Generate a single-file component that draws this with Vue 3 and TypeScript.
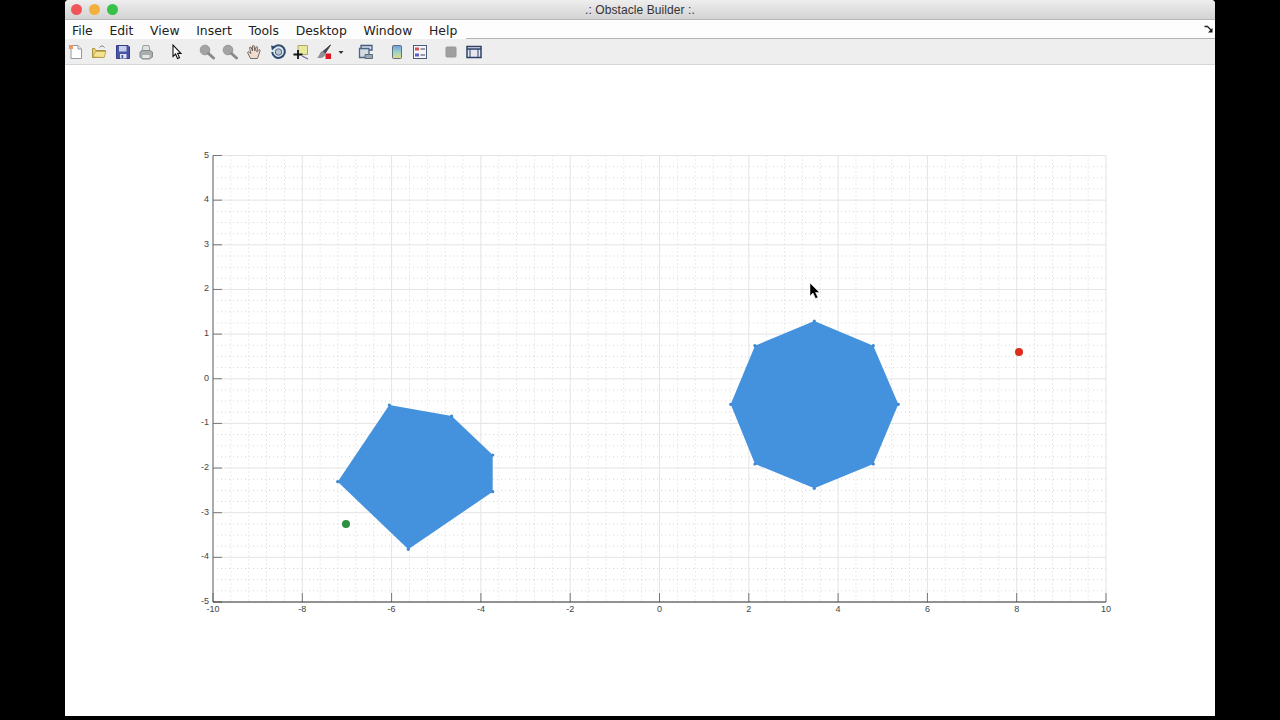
<script setup lang="ts">
const menus = ['File', 'Edit', 'View', 'Insert', 'Tools', 'Desktop', 'Window', 'Help']

// toolbar icon centres, in window pixels
const tools = [
  { id: 'new', x: 11 },
  { id: 'open', x: 34 },
  { id: 'save', x: 58 },
  { id: 'print', x: 81 },
  { id: 'pointer', x: 112 },
  { id: 'zoomin', x: 142 },
  { id: 'zoomout', x: 165 },
  { id: 'hand', x: 189 },
  { id: 'rotate', x: 213 },
  { id: 'cursor', x: 236 },
  { id: 'brush', x: 259 },
  { id: 'caret', x: 276 },
  { id: 'link', x: 301 },
  { id: 'colorbar', x: 332 },
  { id: 'legend', x: 355 },
  { id: 'hide', x: 386 },
  { id: 'show', x: 409 }
]

const toolMargin = (i: number) => {
  const prev = i === 0 ? 0 : tools[i - 1].x + 8
  return tools[i].x - 8 - prev + 'px'
}

// plot area inside the svg
const left = 148
const right = 1041
const top = 90.5
const bottom = 537
const unit = (right - left) / 20
const sx = (v: number) => left + (v + 10) * unit
const sy = (v: number) => bottom - (v + 5) * unit

const xTicks = [-10, -8, -6, -4, -2, 0, 2, 4, 6, 8, 10]
const yTicks = [5, 4, 3, 2, 1, 0, -1, -2, -3, -4, -5]

const xMinor: number[] = []
for (let i = 0; i <= 50; i++) if (i % 5 !== 0) xMinor.push(-10 + i * 0.4)
const yMinor: number[] = []
for (let i = 0; i <= 40; i++) if (i % 4 !== 0) yMinor.push(-5 + i * 0.25)

const pentagon: [number, number][] = [
  [324.3, 340], [386.7, 351], [427.7, 390], [427.7, 426.7], [343.3, 484.3], [272.7, 416.7]
]
const octagon: [number, number][] = [
  [749.3, 256], [808.3, 280.7], [833.3, 339.3], [808.3, 399], [749.3, 423.3], [690, 399], [665.7, 339.3], [690, 280.7]
]
const pts = (p: [number, number][]) => p.map((q) => q.join(',')).join(' ')
</script>

<template>
  <div class="screen">
    <div class="window">
      <header class="titlebar">
        <div class="lights">
          <span class="light red"></span>
          <span class="light yellow"></span>
          <span class="light green"></span>
        </div>
        <span class="title">.: Obstacle Builder :.</span>
      </header>

      <nav class="menubar">
        <span v-for="m in menus" :key="m" class="menu">{{ m }}</span>
        <span class="menu-rest">
          <svg class="dock" width="9" height="8" viewBox="0 0 9 8">
            <path d="M0.5 1.5H3.5L7 5" fill="none" stroke="#222" stroke-width="1.3" />
            <path d="M8.5 3V7.5H4Z" fill="#111" />
          </svg>
        </span>
      </nav>

      <div class="toolbar">
        <svg
          v-for="(t, i) in tools"
          :key="t.id"
          class="tool"
          width="16"
          height="16"
          viewBox="0 0 16 16"
          :style="{ marginLeft: toolMargin(i) }"
        >
          <template v-if="t.id === 'new'">
            <path d="M3 1.5H10L13.5 5V14.5H3Z" fill="#fff" stroke="#8f9aa3" />
            <path d="M10 1.5V5H13.5" fill="#e6eaed" stroke="#8f9aa3" />
            <path d="M1 1H5V5H1Z" fill="#e8996a" />
          </template>
          <template v-else-if="t.id === 'open'">
            <path d="M1.5 5V13.5H13L14.5 6.5H5L3.5 4.5H1.5Z" fill="#e9d26e" stroke="#a8923f" />
            <path d="M2 13L4.5 7.5H15L13 13.5Z" fill="#f4e391" stroke="#a8923f" stroke-width=".6" />
            <path d="M8.5 3.5C10 1.5 12 1.5 13.5 3.5" fill="none" stroke="#777" />
          </template>
          <template v-else-if="t.id === 'save'">
            <path d="M1.5 1.5H13L14.5 3V14.5H1.5Z" fill="#4a55a8" stroke="#333d85" />
            <path d="M4 2H11.5V7.5H4Z" fill="#c8cdea" />
            <path d="M5 10H11.5V14.5H5Z" fill="#dfe2f0" />
            <path d="M6.5 11H8.2V14H6.5Z" fill="#4a55a8" />
          </template>
          <template v-else-if="t.id === 'print'">
            <path d="M5 1.5H11L12 7H4Z" fill="#dfe3e3" stroke="#9aa0a0" />
            <path d="M2 8L4 6.5H12L14.5 8V13L11.5 15H4.5L2 13Z" fill="#a9afaf" stroke="#858a8a" />
            <path d="M4.5 11H11.5V14H4.5Z" fill="#e6e8e8" />
          </template>
          <template v-else-if="t.id === 'pointer'">
            <path d="M4 1V12.5L6.6 10L8.5 14.5L10.5 13.6L8.6 9.4H12Z" fill="#fff" stroke="#111" stroke-width="1.1" />
          </template>
          <template v-else-if="t.id === 'zoomin' || t.id === 'zoomout'">
            <circle cx="6" cy="6" r="4.8" fill="#a3a3a3" stroke="#979797" />
            <path d="M9.5 9.5L14.5 14" stroke="#8a8a8a" stroke-width="3" stroke-linecap="round" />
          </template>
          <template v-else-if="t.id === 'hand'">
            <path d="M4.5 14.5L1.5 8.5L3 7.6L4.8 9.6L3.5 3.5L5 3L6.5 7L6.5 1.8L8.2 1.8L8.8 7L10.2 2.6L11.6 3.2L10.8 8L13 5.5L14.2 6.4L11.5 14.5Z" fill="#f0dccc" stroke="#6b5f58" stroke-width=".9" stroke-linejoin="round" />
          </template>
          <template v-else-if="t.id === 'rotate'">
            <path d="M3.6 3.6A6.3 6.3 0 1 1 2.2 8" fill="#dfe6ee" stroke="#2e4a6e" stroke-width="2" />
            <circle cx="8.5" cy="8" r="3.2" fill="#b9c6d6" stroke="#4d6888" />
            <path d="M1 1.5L6 2.5L2 6.5Z" fill="#2e4a6e" />
          </template>
          <template v-else-if="t.id === 'cursor'">
            <path d="M5 1.5H14.5V10.5H5Z" fill="#e8e99a" stroke="#a7a873" />
            <path d="M5 6V15M0.5 10.5H9.5" stroke="#111" stroke-width="1.8" />
            <path d="M9 12L15 15" stroke="#6b63a8" stroke-width="1.2" />
          </template>
          <template v-else-if="t.id === 'brush'">
            <path d="M14.5 1L7 7.5L9 9.5Z" fill="#4a4f58" stroke="#3b3f47" />
            <path d="M6.5 7C3 8 4.5 11.5 1 13.5C5 15 9.5 13 9.2 9.8Z" fill="#8d9299" />
            <rect x="9.5" y="9.5" width="5.5" height="5.5" fill="#e0141e" />
          </template>
          <template v-else-if="t.id === 'caret'">
            <path d="M5.5 7H10.5L8 10Z" fill="#333" />
          </template>
          <template v-else-if="t.id === 'link'">
            <path d="M3 1.5H14V6H3Z" fill="#dde3ea" stroke="#3f5a7e" stroke-width="1.3" />
            <path d="M1.5 4.5H11V13.5H1.5Z" fill="#d3dae2" stroke="#4c6587" stroke-width="1.3" />
            <path d="M7 10.5H14.5V14.5H7Z" fill="#9aa6b2" stroke="#5c6c80" />
          </template>
          <template v-else-if="t.id === 'colorbar'">
            <defs>
              <linearGradient id="cbar" x1="0" y1="0" x2="0" y2="1">
                <stop offset="0" stop-color="#6f9ee0" />
                <stop offset=".55" stop-color="#9fd5c4" />
                <stop offset="1" stop-color="#e9d77f" />
              </linearGradient>
            </defs>
            <rect x="3.5" y="1.5" width="9" height="13" rx="1" fill="url(#cbar)" stroke="#5f6f80" />
          </template>
          <template v-else-if="t.id === 'legend'">
            <rect x="1.5" y="1.5" width="13" height="13" fill="#f5f6fa" stroke="#4c5a80" />
            <rect x="3" y="3.5" width="4" height="3" fill="#d8505a" />
            <rect x="3" y="9.5" width="4" height="3" fill="#5a5fc8" />
            <path d="M8.5 5H13M8.5 11H13" stroke="#444" stroke-width="1.2" />
          </template>
          <template v-else-if="t.id === 'hide'">
            <rect x="3" y="3" width="10" height="10" rx="1" fill="#a0a0a0" stroke="#969696" />
          </template>
          <template v-else>
            <rect x="1" y="2.5" width="14" height="11" fill="#e4e7ee" stroke="#2c4068" stroke-width="1.5" />
            <path d="M1 5H15" stroke="#2c4068" stroke-width="1.5" />
            <path d="M4 5V13M12 5V13" stroke="#2c4068" />
          </template>
        </svg>
      </div>

      <main class="figure">
        <svg class="plot" width="1150" height="651" viewBox="0 0 1150 651">
          <!-- minor grid -->
          <g class="minor">
            <line v-for="v in xMinor" :key="'xm' + v" :x1="sx(v)" :x2="sx(v)" :y1="top" :y2="bottom" />
            <line v-for="v in yMinor" :key="'ym' + v" :x1="left" :x2="right" :y1="sy(v)" :y2="sy(v)" />
          </g>
          <!-- major grid -->
          <g class="major">
            <line v-for="v in xTicks" :key="'xg' + v" :x1="sx(v)" :x2="sx(v)" :y1="top" :y2="bottom" />
            <line v-for="v in yTicks" :key="'yg' + v" :x1="left" :x2="right" :y1="sy(v)" :y2="sy(v)" />
          </g>

          <polygon class="obstacle" :points="pts(pentagon)" />
          <polygon class="obstacle" :points="pts(octagon)" />
          <g class="vertex">
            <circle v-for="p in pentagon.concat(octagon)" :key="p.join()" :cx="p[0]" :cy="p[1]" r="1.6" />
          </g>

          <circle cx="281" cy="459" r="4" fill="#2f8f42" />
          <circle cx="954" cy="287" r="4" fill="#dd2c1c" />

          <!-- axes and ticks -->
          <g class="ticks">
            <line v-for="v in xTicks" :key="'xt' + v" :x1="sx(v)" :x2="sx(v)" :y1="bottom" :y2="bottom - 9" />
            <line v-for="v in yTicks" :key="'yt' + v" :x1="left" :x2="left + 9" :y1="sy(v)" :y2="sy(v)" />
          </g>
          <line class="axis-y" :x1="left" :x2="left" :y1="top" :y2="bottom" />
          <line class="axis-x" :x1="left" :x2="right" :y1="bottom" :y2="bottom" />
          <g class="labels">
            <text v-for="v in xTicks" :key="'xl' + v" :x="sx(v)" :y="bottom + 10" text-anchor="middle">{{ v }}</text>
            <text v-for="v in yTicks" :key="'yl' + v" :x="left - 4" :y="sy(v) + 2" text-anchor="end">{{ v }}</text>
          </g>

          <path class="mouse" d="M745 218V231L748 228L750.5 233.5L753 232.5L750.5 227.5H754.5Z" />
        </svg>
      </main>
    </div>
  </div>
</template>

<style scoped>
.screen {
  width: 1280px;
  height: 720px;
  background: #000;
  display: flex;
  justify-content: center;
  overflow: hidden;
}

.window {
  width: 1150px;
  height: 716px;
  background: #fff;
  border-radius: 4px 4px 0 0;
  display: flex;
  flex-direction: column;
  overflow: hidden;
}

.titlebar {
  height: 20px;
  flex: none;
  background: linear-gradient(#eeeeee, #d3d3d3);
  border-bottom: 1px solid #b8b8b8;
  box-sizing: border-box;
  display: flex;
  align-items: center;
  justify-content: center;
  position: relative;
}

.lights {
  position: absolute;
  left: 6px;
  top: 4px;
  display: flex;
  gap: 7px;
}

.light {
  width: 11px;
  height: 11px;
  border-radius: 50%;
}

.red { background: #f0555a; }
.yellow { background: #f2b13c; }
.green { background: #35c14a; }

.title {
  font: 12px "Liberation Sans", Arial, sans-serif;
  color: #333;
  letter-spacing: 0.08px;
}

.menubar {
  height: 19px;
  flex: none;
  background: #fdfdfd;
  display: flex;
  align-items: center;
  padding-left: 7px;
  font: 12.4px "DejaVu Sans", Verdana, sans-serif;
  color: #222;
}

.menu {
  margin-right: 16.7px;
  padding-top: 2px;
  line-height: 19px;
}

.menu-rest {
  flex: 1;
  align-self: stretch;
  margin-left: -8px;
  border-bottom: 1px solid #b4b4b4;
  display: flex;
  align-items: center;
  justify-content: flex-end;
  padding-right: 2px;
}

.toolbar {
  height: 26px;
  flex: none;
  box-sizing: border-box;
  background: #eeeeee;
  border-bottom: 1px solid #d6d6d6;
  display: flex;
  align-items: center;
}

.tool {
  flex: none;
}

.figure {
  flex: 1;
  min-height: 0;
}

.plot {
  display: block;
}

.minor line {
  stroke: #d6d6d6;
  stroke-width: 1;
  stroke-dasharray: 1 3;
}

.major line {
  stroke: #e4e4e4;
  stroke-width: 1;
}

.obstacle {
  fill: #4492de;
}

.vertex circle {
  fill: #3f87cf;
}

.ticks line {
  stroke: #777;
  stroke-width: 1;
}

.axis-y {
  stroke: #666;
  stroke-width: 1;
}

.axis-x {
  stroke: #333;
  stroke-width: 1;
}

.labels text {
  font: 9px "Liberation Sans", Arial, sans-serif;
  fill: #444;
}

.mouse {
  fill: #000;
  stroke: #fff;
  stroke-width: 0.5;
}
</style>
